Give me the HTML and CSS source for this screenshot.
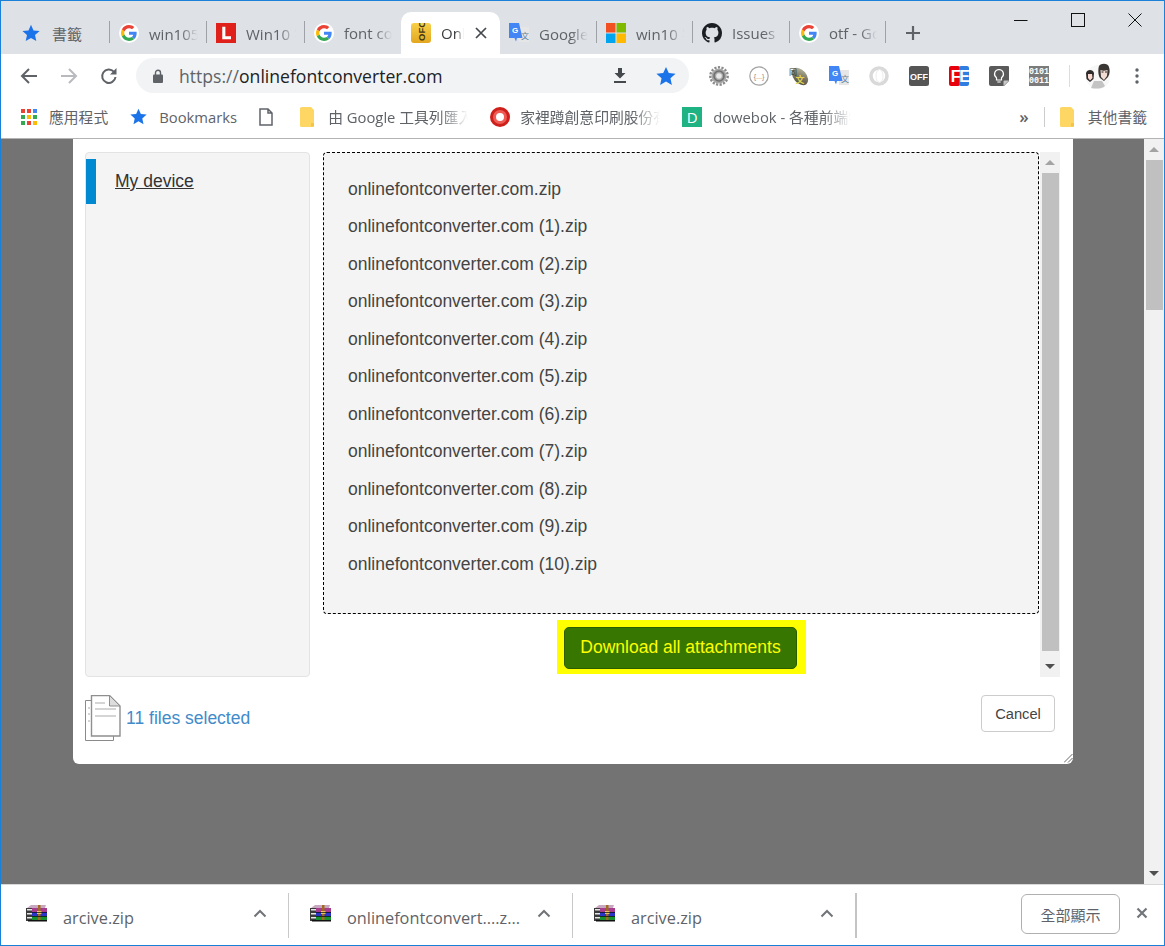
FILE: index.html
```html
<!DOCTYPE html>
<html lang="zh-Hant">
<head>
<meta charset="utf-8">
<title>Online Font Converter</title>
<link rel="stylesheet" href="styles.css">
</head>
<body>
<svg class="defs" width="0" height="0" aria-hidden="true">
  <defs>
    <linearGradient id="stone" x1="0" y1="0" x2="1" y2="1">
      <stop offset="0" stop-color="#c9c7ae"/>
      <stop offset=".55" stop-color="#77755f"/>
      <stop offset="1" stop-color="#3f3e35"/>
    </linearGradient>
    <linearGradient id="gold" x1="0" y1="0" x2="0" y2="1">
      <stop offset="0" stop-color="#f7d04a"/>
      <stop offset="1" stop-color="#e3a71f"/>
    </linearGradient>
  </defs>
  <symbol id="g" viewBox="-6 -6 60 60">
    <circle cx="24" cy="24" r="30" fill="#fff"/>
    <path fill="#EA4335" d="M24 9.5c3.54 0 6.71 1.22 9.21 3.6l6.85-6.85C35.9 2.38 30.47 0 24 0 14.62 0 6.51 5.38 2.56 13.22l7.98 6.19C12.43 13.72 17.74 9.5 24 9.5z"/>
    <path fill="#4285F4" d="M46.98 24.55c0-1.57-.15-3.09-.38-4.55H24v9.02h12.94c-.58 2.96-2.26 5.48-4.78 7.18l7.73 6c4.51-4.18 7.09-10.36 7.09-17.65z"/>
    <path fill="#FBBC05" d="M10.53 28.59c-.48-1.45-.76-2.99-.76-4.59s.27-3.14.76-4.59l-7.98-6.19C.92 16.46 0 20.12 0 24c0 3.88.92 7.54 2.56 10.78l7.97-6.19z"/>
    <path fill="#34A853" d="M24 48c6.48 0 11.93-2.13 15.89-5.81l-7.73-6c-2.15 1.45-4.92 2.3-8.16 2.3-6.26 0-11.57-4.22-13.47-9.91l-7.98 6.19C6.51 42.62 14.62 48 24 48z"/>
  </symbol>
  <symbol id="star" viewBox="0 0 18 18">
    <path fill="#1a73e8" d="M9 .8l2.500 5.600 6.100.6-4.600 4.100 1.300 6-5.300-3.100-5.300 3.100 1.300-6L.4 7l6.100-.6z"/>
  </symbol>
  <symbol id="translate" viewBox="0 0 20 20">
    <path fill="#e6e6e6" d="M9 4h11v15H10z"/>
    <path fill="#4285f4" d="M0 0h10l3.500 15H8l-1 3.500L5.500 15H0z"/>
    <text x="3" y="10" class="svg-g">G</text>
    <text x="12" y="15.500" class="svg-wen">文</text>
  </symbol>
  <symbol id="folder" viewBox="0 0 17 20">
    <path fill="#fdd663" d="M1 1.500A1.500 1.500 0 0 1 2.500 0h9.500L15 3v15.500a1.500 1.500 0 0 1-1.500 1.500h-11A1.500 1.500 0 0 1 1 18.500z"/>
    <path fill="#f4c542" d="M12 16h3v3.500h-3z"/>
  </symbol>
  <symbol id="rar" viewBox="0 0 22 18">
    <path fill="#c8a8c0" d="M1 3l4-3h15l-1 3z"/>
    <path fill="#a83d8e" d="M1 3h20v4H1z"/>
    <path fill="#2a35c8" d="M1 7h20v4H1z"/>
    <path fill="#17902f" d="M1 11h20v4H1z"/>
    <path fill="#3a3a3a" d="M0 3h6v13H0z"/>
    <path fill="#e6e6e6" d="M1 4h5v1.500H1zM1 8h5v1.500H1zM1 12h5v1.500H1z"/>
    <path fill="#a06a22" d="M12 0h2.500v16H12z"/>
    <path fill="#e8c35a" d="M11 6h4.500v3H11z"/>
    <path fill="#111" d="M6 7h15v.7H6zM6 11h15v.7H6zM2 15h19v1.500H2z"/>
  </symbol>
  <symbol id="chev" viewBox="0 0 14 9">
    <path fill="none" stroke="#707478" stroke-width="2" d="M1.500 7.500L7 2l5.500 5.500"/>
  </symbol>
</svg>

<div class="window">
  <header class="tabstrip">
    <div class="tab tab-first">
      <svg class="fav star-fav"><use href="#star"/></svg>
      <span class="title title-cjk">書籤</span>
    </div>
    <div class="tab">
      <svg class="fav"><use href="#g"/></svg>
      <span class="title">win105 字型</span>
    </div>
    <div class="tab tab-wide">
      <svg class="fav" viewBox="0 0 16 16"><rect width="16" height="16" fill="#e0201b"/><path d="M5 3h2.500v7.500H12V13H5z" fill="#fff"/></svg>
      <span class="title">Win10 字型</span>
    </div>
    <div class="tab tab-before-active">
      <svg class="fav"><use href="#g"/></svg>
      <span class="title">font converter</span>
    </div>
    <div class="tab tab-active">
      <svg class="fav" viewBox="0 0 20 20">
        <rect width="20" height="20" rx="3" fill="url(#gold)"/>
        <text x="-18" y="13.800" class="svg-ofc" transform="rotate(-90)">OFC</text>
      </svg>
      <span class="title title-active">Online Font</span>
      <svg class="tab-close" viewBox="0 0 12 12"><path d="M1 1l10 10m0-10L1 11" stroke="#45484c" stroke-width="1.700" fill="none"/></svg>
    </div>
    <div class="tab">
      <svg class="fav"><use href="#translate"/></svg>
      <span class="title">Google 翻譯</span>
    </div>
    <div class="tab tab-narrow">
      <svg class="fav" viewBox="0 0 20 20"><rect width="9.500" height="9.500" fill="#f25022"/><rect x="10.500" width="9.500" height="9.500" fill="#7fba00"/><rect y="10.500" width="9.500" height="9.500" fill="#00a4ef"/><rect x="10.500" y="10.500" width="9.500" height="9.500" fill="#ffb900"/></svg>
      <span class="title">win10 字型</span>
    </div>
    <div class="tab">
      <svg class="fav" viewBox="0 0 16 16"><path fill="#1b1f23" d="M8 0C3.58 0 0 3.58 0 8c0 3.54 2.29 6.53 5.47 7.59.4.07.55-.17.55-.38 0-.19-.01-.82-.01-1.49-2.01.37-2.53-.49-2.69-.94-.09-.23-.48-.94-.82-1.13-.28-.15-.68-.52-.01-.53.63-.01 1.08.58 1.23.82.72 1.21 1.87.87 2.33.66.07-.52.28-.87.51-1.07-1.78-.2-3.64-.89-3.64-3.95 0-.87.31-1.59.82-2.15-.08-.2-.36-1.02.08-2.12 0 0 .67-.21 2.2.82.64-.18 1.32-.27 2-.27.68 0 1.36.09 2 .27 1.53-1.04 2.2-.82 2.2-.82.44 1.1.16 1.92.08 2.12.51.56.82 1.27.82 2.15 0 3.07-1.87 3.75-3.65 3.95.29.25.54.73.54 1.48 0 1.070-.01 1.930-.01 2.200 0 .21.15.46.55.38A8.013 8.013 0 0016 8c0-4.420-3.580-8-8-8z"/></svg>
      <span class="title">Issues · font</span>
    </div>
    <div class="tab tab-narrow">
      <svg class="fav"><use href="#g"/></svg>
      <span class="title">otf - Google</span>
    </div>
    <svg class="newtab" viewBox="0 0 16 16"><path d="M8 1v14M1 8h14" stroke="#5f6368" stroke-width="2.200" fill="none"/></svg>
    <div class="winctl">
      <svg class="ctl" viewBox="0 0 14 14"><path d="M0 7.500h13.500" stroke="#111" fill="none"/></svg>
      <svg class="ctl" viewBox="0 0 14 14"><rect x=".5" y=".5" width="13" height="13" stroke="#111" fill="none"/></svg>
      <svg class="ctl" viewBox="0 0 14 14"><path d="M.5.5l13 13m0-13l-13 13" stroke="#111" fill="none"/></svg>
    </div>
  </header>

  <nav class="toolbar">
    <svg class="navbtn" viewBox="0 0 18 18"><path d="M17 9H2m7-7L2 9l7 7" stroke="#5f6368" stroke-width="2" fill="none"/></svg>
    <svg class="navbtn" viewBox="0 0 18 18"><path d="M1 9h15M9 2l7 7-7 7" stroke="#b8babd" stroke-width="2" fill="none"/></svg>
    <svg class="navbtn" viewBox="0 0 18 18"><path d="M15.500 10a6.700 6.700 0 1 1-1.700-5.300" stroke="#5f6368" stroke-width="2" fill="none"/><path d="M16.500 1v6.500H10z" fill="#5f6368"/></svg>
    <div class="omnibox">
      <svg class="lock" viewBox="0 0 10 14"><path d="M2.500 6V3.800a2.500 2.500 0 0 1 5 0V6" stroke="#5f6368" stroke-width="1.400" fill="none"/><rect y="5.500" width="10" height="8.500" rx="1" fill="#5f6368"/></svg>
      <span class="url"><span class="url-scheme">https://</span>onlinefontconverter.com</span>
      <svg class="omni-dl" viewBox="0 0 14 15"><path d="M5 0h4v5h3.500L7 10.500 1.500 5H5zM1 13h12v2H1z" fill="#45484c"/></svg>
      <svg class="omni-star"><use href="#star"/></svg>
    </div>
    <div class="exts">
      <svg class="ext" viewBox="0 0 20 20"><circle cx="10" cy="10" r="8.700" fill="none" stroke="#8a8a8a" stroke-width="2.400" stroke-dasharray="2.200 1.400"/><circle cx="10" cy="10" r="7.600" fill="#a6a6a6"/><circle cx="10" cy="10" r="5" fill="none" stroke="#707070" stroke-width="1.600"/><circle cx="10" cy="10" r="2.800" fill="#e8e8e8"/></svg>
      <svg class="ext" viewBox="0 0 20 20"><circle cx="10" cy="10" r="9.200" fill="#fff" stroke="#a3a3a3" stroke-width="1.200"/><text x="10" y="12.500" class="svg-json">{...}</text></svg>
      <svg class="ext" viewBox="0 0 20 20"><ellipse cx="11" cy="10.500" rx="10" ry="6.500" fill="url(#stone)" transform="rotate(50 11 10.500)"/><text x="0" y="8.500" class="svg-wen1">同</text><text x="6.500" y="17" class="svg-wen2">文</text></svg>
      <svg class="ext" viewBox="0 0 20 20"><use href="#translate"/></svg>
      <svg class="ext" viewBox="0 0 20 20"><circle cx="10" cy="10" r="8" fill="none" stroke="#d9d9d9" stroke-width="3.600"/><ellipse cx="10.500" cy="10" rx="3.500" ry="6.500" fill="#fff" stroke="#ececec"/></svg>
      <svg class="ext" viewBox="0 0 20 20"><rect width="20" height="20" rx="2.500" fill="#555"/><text x="10" y="13.800" class="svg-off">OFF</text></svg>
      <svg class="ext" viewBox="0 0 20 20"><rect width="11" height="20" rx="2" fill="#e8000d"/><rect x="10" width="10" height="20" rx="2" fill="#2f7de0"/><text x="1.800" y="15.800" class="svg-fe">F</text><text x="10.200" y="15.800" class="svg-fe">E</text></svg>
      <svg class="ext" viewBox="0 0 20 20"><path d="M2 0h17a1 1 0 0 1 1 1v14l-5 5H2a2 2 0 0 1-2-2V2a2 2 0 0 1 2-2z" fill="#5a5a5a"/><path d="M20 14.500h-4.500a1 1 0 0 0-1 1V20z" fill="#c9c9c9"/><path d="M10 3.500a4.500 4.500 0 0 1 2.500 8.200V14h-5v-2.300A4.500 4.500 0 0 1 10 3.500zM8.300 16h3.400" stroke="#fff" stroke-width="1.200" fill="none"/></svg>
      <svg class="ext" viewBox="0 0 20 20"><rect width="20" height="20" fill="#7b7b7b"/><text x="10" y="8.300" class="svg-bin">0101</text><text x="10" y="17.300" class="svg-bin">0011</text></svg>
    </div>
    <span class="tool-sep"></span>
    <svg class="avatar" viewBox="0 0 26 26">
      <circle cx="13" cy="14" r="12" fill="#f7f7f7"/>
      <path d="M14 3c2-3 9-3 10 1 1 3 1 7-1 10l-4 4-4-3c-2-3-2-9-1-12z" fill="#3a3634"/>
      <path d="M15.500 7c2 1 4 1 7 0l-.5 6-3 4-3-3z" fill="#f3ddd3"/>
      <path d="M16.500 9h2M20 9h2" stroke="#222"/>
      <path d="M1 10c1-4 7-4 8 0l-.5 6-3.500 3-3.500-3z" fill="#2f2b2a"/>
      <path d="M3 11h4l.5 4-2.500 2.500L3 15z" fill="#f8d7d0"/>
      <path d="M6 25l3-7h8l3 5c-3 3-10 3-14 2z" fill="#c4c4c4"/>
    </svg>
    <svg class="menu" viewBox="0 0 4 16"><circle cx="2" cy="2" r="1.700" fill="#5f6368"/><circle cx="2" cy="8" r="1.700" fill="#5f6368"/><circle cx="2" cy="14" r="1.700" fill="#5f6368"/></svg>
  </nav>

  <div class="bookmarks">
    <div class="bm">
      <svg class="bm-ico-16" viewBox="0 0 16 16">
        <rect width="4" height="4" fill="#ea4335"/><rect x="6" width="4" height="4" fill="#ea4335"/><rect x="12" width="4" height="4" fill="#4285f4"/>
        <rect y="6" width="4" height="4" fill="#34a853"/><rect x="6" y="6" width="4" height="4" fill="#fbbc05"/><rect x="12" y="6" width="4" height="4" fill="#34a853"/>
        <rect y="12" width="4" height="4" fill="#34a853"/><rect x="6" y="12" width="4" height="4" fill="#ea4335"/><rect x="12" y="12" width="4" height="4" fill="#fbbc05"/>
      </svg>
      <span class="bm-text">應用程式</span>
    </div>
    <div class="bm">
      <svg class="bm-ico-17"><use href="#star"/></svg>
      <span class="bm-text">Bookmarks</span>
    </div>
    <div class="bm bm-doc">
      <svg class="doc" viewBox="0 0 14 18"><path d="M1 1h8l4 4v12H1z M9 1v4h4" fill="#fff" stroke="#5f6368" stroke-width="1.500"/></svg>
    </div>
    <div class="bm">
      <svg class="bm-folder"><use href="#folder"/></svg>
      <span class="bm-text bm-fade bm-w140">由 Google 工具列匯入</span>
    </div>
    <div class="bm bm-tight">
      <svg class="bm-ico-20" viewBox="0 0 20 20"><circle cx="10" cy="10" r="10" fill="#cf1f1b"/><circle cx="10" cy="10" r="7" fill="#ee5b54"/><circle cx="10" cy="10" r="4" fill="#fff"/></svg>
      <span class="bm-text bm-fade bm-w140">家裡蹲創意印刷股份有限公司</span>
    </div>
    <div class="bm bm-tight">
      <span class="letter-ico">D</span>
      <span class="bm-text bm-fade bm-w138">dowebok - 各種前端特效</span>
    </div>
    <div class="bm-right">
      <span class="more">»</span>
      <span class="bm-sep"></span>
      <div class="bm">
        <svg class="bm-folder"><use href="#folder"/></svg>
        <span class="bm-text">其他書籤</span>
      </div>
    </div>
  </div>

  <main class="viewport">
    <div class="page">
      <section class="modal">
        <div class="modal-body">
          <aside class="sources">
            <a class="source-item" href="#">My device</a>
          </aside>
          <div class="results">
            <ul class="files">
              <li>onlinefontconverter.com.zip</li>
              <li>onlinefontconverter.com (1).zip</li>
              <li>onlinefontconverter.com (2).zip</li>
              <li>onlinefontconverter.com (3).zip</li>
              <li>onlinefontconverter.com (4).zip</li>
              <li>onlinefontconverter.com (5).zip</li>
              <li>onlinefontconverter.com (6).zip</li>
              <li>onlinefontconverter.com (7).zip</li>
              <li>onlinefontconverter.com (8).zip</li>
              <li>onlinefontconverter.com (9).zip</li>
              <li>onlinefontconverter.com (10).zip</li>
            </ul>
            <div class="dl-wrap"><button class="dl-all">Download all attachments</button></div>
          </div>
          <div class="scrollbar scrollbar-inner">
            <span class="arrow-up"></span>
            <div class="track"><div class="thumb thumb-inner"></div></div>
            <span class="arrow-down"></span>
          </div>
        </div>
        <footer class="modal-foot">
          <div class="selected">
            <svg class="files-ico" viewBox="0 0 36 46">
              <path d="M.5 5.500h6v35h22v5H.5z" fill="#fff" stroke="#8a8a8a"/>
              <path d="M6.500.5h18l10.500 10.500v30H6.500z" fill="#fff" stroke="#8f8f8f" stroke-width="1.400"/>
              <path d="M24.500.5v10.500h10.500z" fill="#ddd" stroke="#8f8f8f"/>
              <path d="M10 8h10M10 14h21M10 21h21" stroke="#d5d5d5" stroke-width="2"/>
              <path d="M3 13h2M3 19h2M3 26h2" stroke="#d5d5d5" stroke-width="2"/>
            </svg>
            <span class="selected-text">11 files selected</span>
          </div>
          <button class="cancel">Cancel</button>
        </footer>
        <svg class="resize" viewBox="0 0 9 9"><path d="M0 8.500L8.500 0M4 8.500L8.500 4" stroke="#666" fill="none"/></svg>
      </section>
      <div class="scrollbar scrollbar-main">
        <span class="arrow-up"></span>
        <div class="track"><div class="thumb thumb-main"></div></div>
        <span class="arrow-down"></span>
      </div>
    </div>
  </main>

  <footer class="downloads">
    <div class="dl-item">
      <svg class="rar"><use href="#rar"/></svg>
      <span class="dl-name">arcive.zip</span>
      <svg class="chev"><use href="#chev"/></svg>
    </div>
    <div class="dl-item">
      <svg class="rar"><use href="#rar"/></svg>
      <span class="dl-name">onlinefontconvert....z...</span>
      <svg class="chev"><use href="#chev"/></svg>
    </div>
    <div class="dl-item dl-item-last">
      <svg class="rar"><use href="#rar"/></svg>
      <span class="dl-name">arcive.zip</span>
      <svg class="chev"><use href="#chev"/></svg>
    </div>
    <button class="show-all">全部顯示</button>
    <svg class="dl-close" viewBox="0 0 12 12"><path d="M1.500 1.500l9 9m0-9l-9 9" stroke="#72767a" stroke-width="2.200" fill="none"/></svg>
  </footer>
</div>
</body>
</html>
```

FILE: styles.css
```css
* { box-sizing: border-box; }
html, body { margin: 0; padding: 0; }
body {
  width: 1165px;
  height: 946px;
  overflow: hidden;
  font-family: "Open Sans", "Noto Sans CJK TC", sans-serif;
  background: #fff;
}
.defs { position: absolute; }
.window {
  width: 1165px;
  height: 946px;
  border: 1px solid #1a80d8;
  display: flex;
  flex-direction: column;
  background: #fff;
}

/* tab strip */
.tabstrip {
  height: 53px;
  flex: none;
  background: #dee1e6;
  padding-top: 11px;
  display: flex;
  align-items: stretch;
  position: relative;
}
.tab {
  width: 97px;
  height: 42px;
  flex: none;
  display: flex;
  align-items: center;
  gap: 10px;
  padding: 0 9px 0 9px;
  position: relative;
}
.tab::after {
  content: "";
  position: absolute;
  right: 0;
  top: 9px;
  height: 22px;
  width: 1px;
  background: #9ea1a6;
}
.tab-first { width: 109px; padding-left: 21px; gap: 12px; }
.tab-wide { width: 98px; }
.tab-before-active { width: 96px; }
.tab-before-active::after, .tab-active::after { display: none; }
.tab-active {
  width: 99px;
  background: #fff;
  border-radius: 10px 10px 0 0;
  padding: 0 13px 0 10px;
  gap: 10px;
}
.tab-narrow { width: 96px; }
.fav { width: 20px; height: 20px; flex: none; }
.star-fav { width: 18px; height: 18px; }
.title {
  font-size: 15px;
  color: #5f6368;
  white-space: nowrap;
  overflow: hidden;
  flex: 1;
  min-width: 0;
  -webkit-mask-image: linear-gradient(90deg, #000 65%, transparent 100%);
  mask-image: linear-gradient(90deg, #000 65%, transparent 100%);
}
.title-cjk { -webkit-mask-image: none; mask-image: none; }
.title-active { color: #3c4043; }
.tab-close { width: 12px; height: 12px; flex: none; margin-left: 1px; }
.newtab { width: 16px; height: 16px; margin: 13px 0 0 19px; flex: none; }
.winctl {
  position: absolute;
  right: 0;
  top: 0;
  display: flex;
}
.ctl { width: 14px; height: 14px; margin: 12px 22px 0 21px; }

/* toolbar */
.toolbar {
  height: 43px;
  flex: none;
  background: #fff;
  display: flex;
  align-items: center;
  padding-left: 19px;
}
.navbtn { width: 18px; height: 18px; margin-right: 22px; flex: none; }
.navbtn:nth-child(3) { margin-right: 18px; }
.omnibox {
  width: 553px;
  height: 35px;
  background: #f1f3f4;
  border-radius: 18px;
  display: flex;
  align-items: center;
  padding: 0 13px 0 17px;
  flex: none;
}
.lock { width: 10px; height: 14px; flex: none; }
.url {
  margin-left: 16px;
  font-size: 17.6px;
  color: #202124;
  flex: 1;
  white-space: nowrap;
}
.url-scheme { color: #5f6368; }
.omni-dl { width: 14px; height: 15px; margin-right: 29px; flex: none; }
.omni-star { width: 20px; height: 20px; flex: none; }
.exts { display: flex; margin-left: 10px; flex: none; }
.ext { width: 20px; height: 20px; margin: 0 10px; flex: none; }
.tool-sep { width: 1px; height: 22px; background: #ddd; margin-left: 10px; flex: none; }
.avatar { width: 26px; height: 26px; margin-left: 15px; flex: none; }
.menu { width: 4px; height: 16px; margin-left: 24px; flex: none; }

.svg-g { font: bold 8px "Liberation Sans", sans-serif; fill: #fff; }
.svg-wen { font: 8px "Noto Sans CJK TC", sans-serif; fill: #5f7f9f; }
.svg-wen1 { font: 8px "Noto Sans CJK TC", sans-serif; fill: #2e2e22; }
.svg-wen2 { font: bold 9px "Noto Sans CJK TC", sans-serif; fill: #e3d34f; }
.svg-ofc { font: bold 9.5px "Liberation Sans", sans-serif; fill: #3f3512; }
.svg-json { font: 7px "Liberation Sans", sans-serif; fill: #888; text-anchor: middle; }
.svg-off { font: bold 9px "Liberation Sans", sans-serif; fill: #fff; text-anchor: middle; }
.svg-fe { font: bold 16px "Liberation Sans", sans-serif; fill: #fff; }
.svg-bin { font: bold 8.4px "Liberation Mono", monospace; fill: #fff; text-anchor: middle; }

/* bookmarks */
.bookmarks {
  height: 42px;
  flex: none;
  background: #fff;
  border-bottom: 1px solid #b3b3b3;
  display: flex;
  align-items: center;
  gap: 22px;
  padding: 0 17px 2px 20px;
}
.bm { display: flex; align-items: center; gap: 12px; flex: none; }
.bm-tight { gap: 10px; }
.bm-doc { width: 18px; }
.bm-ico-16 { width: 16px; height: 16px; }
.bm-ico-17 { width: 17px; height: 17px; }
.bm-ico-20 { width: 20px; height: 20px; }
.bm-folder { width: 17px; height: 20px; }
.doc { width: 14px; height: 18px; }
.letter-ico {
  width: 20px;
  height: 20px;
  margin-right: 1px;
  background: #1fb282;
  color: #fff;
  font-size: 15px;
  line-height: 20px;
  text-align: center;
}
.bm-text {
  font-size: 14.8px;
  color: #5f6368;
  white-space: nowrap;
}
.bm-fade {
  overflow: hidden;
  -webkit-mask-image: linear-gradient(90deg, #000 80%, transparent 100%);
  mask-image: linear-gradient(90deg, #000 80%, transparent 100%);
}
.bm-w140 { width: 140px; }
.bm-w138 { width: 138px; }
.bm-right { margin-left: auto; display: flex; align-items: center; flex: none; }
.more { font-size: 17px; color: #5f6368; margin-right: 15px; font-weight: 600; }
.bm-sep { width: 1px; height: 20px; background: #ccc; margin-right: 14px; }

/* page */
.viewport { flex: 1; min-height: 0; background: #737373; }
.page { height: 100%; display: flex; justify-content: space-between; }
.modal {
  width: 1000px;
  height: 625px;
  margin-left: 72px;
  background: #fff;
  border-radius: 0 0 6px 6px;
  padding: 13px 13px 0 12px;
  position: relative;
  font-family: "Liberation Sans", Arial, sans-serif;
}
.modal-body { display: flex; height: 525px; }
.sources {
  width: 225px;
  flex: none;
  background: #f4f4f4;
  border: 1px solid #e3e3e3;
  border-radius: 4px;
  padding-top: 6px;
}
.source-item {
  display: block;
  height: 45px;
  line-height: 44px;
  border-left: 10px solid #0089d0;
  padding-left: 19px;
  font-size: 17.5px;
  color: #333;
  text-decoration: underline;
}
.results { width: 717px; margin-left: 13px; flex: none; }
.files {
  list-style: none;
  margin: 0;
  width: 716px;
  height: 462px;
  padding: 17.5px 0 0 24px;
  background: #f4f4f4;
  border: 1px dashed #000;
  border-radius: 4px;
  font-size: 17.5px;
  line-height: 37.5px;
  color: #444;
}
.dl-wrap {
  width: 249px;
  height: 54px;
  margin: 6px 0 0 234px;
  background: #ff0;
  padding: 7px 9px 7px 7px;
}
.dl-all {
  display: block;
  width: 233px;
  height: 42px;
  padding: 0 0 2px;
  background: #377600;
  border: 1px solid #2c5e00;
  border-radius: 5px;
  color: #ff0;
  font: 17.5px "Liberation Sans", Arial, sans-serif;
}
.modal-foot {
  margin-top: 18px;
  padding-right: 5px;
  display: flex;
  justify-content: space-between;
  align-items: flex-start;
}
.selected { display: flex; align-items: center; gap: 5px; height: 46px; }
.files-ico { width: 36px; height: 46px; flex: none; }
.selected-text { font-size: 17.5px; color: #428bca; }
.cancel {
  width: 74px;
  height: 37px;
  padding: 0;
  background: #fff;
  border: 1px solid #ccc;
  border-radius: 4px;
  color: #444;
  font: 14.7px "Liberation Sans", Arial, sans-serif;
}
.resize { position: absolute; right: 0; bottom: 1px; width: 9px; height: 9px; }

/* scrollbars */
.scrollbar {
  width: 20px;
  flex: none;
  background: #f1f1f1;
  display: flex;
  flex-direction: column;
  align-items: center;
}
.scrollbar-inner { height: 525px; }
.scrollbar-main { height: 100%; }
.track { flex: 1; width: 100%; padding: 0 1px; }
.thumb { width: 17px; background: #c0c0c0; margin: 0 auto; }
.thumb-inner { height: 478px; }
.thumb-main { height: 150px; }
.arrow-up, .arrow-down { width: 0; height: 0; flex: none; border-left: 5px solid transparent; border-right: 5px solid transparent; }
.arrow-up { border-bottom: 5px solid #a3a3a3; margin: 8px 0; }
.arrow-down { border-top: 5px solid #505050; margin: 8px 0; }

/* downloads */
.downloads {
  height: 61px;
  flex: none;
  background: #fff;
  border-top: 1px solid #d8d8d8;
  display: flex;
  align-items: center;
  padding-left: 4px;
}
.dl-item {
  width: 284px;
  height: 45px;
  flex: none;
  display: flex;
  align-items: center;
  padding-left: 21px;
  border-right: 1px solid #c9c9c9;
}
.dl-item-last { border-right: 2px solid #c4c4c4; }
.rar { width: 22px; height: 18px; flex: none; margin-right: 15px; margin-top: -3px; }
.dl-name { font-size: 16.3px; color: #5f6368; white-space: nowrap; margin-top: 6px; }
.chev { width: 14px; height: 9px; margin: -4px 21px 0 auto; flex: none; }
.show-all {
  width: 99px;
  height: 40px;
  margin-left: 164px;
  margin-top: -2px;
  padding: 0;
  background: #fff;
  border: 1px solid #b0b0b0;
  border-radius: 6px;
  color: #5f6368;
  font: 15px "Noto Sans CJK TC", sans-serif;
  flex: none;
}
.dl-close { width: 12px; height: 12px; margin: -4px 0 0 16px; flex: none; }
```
